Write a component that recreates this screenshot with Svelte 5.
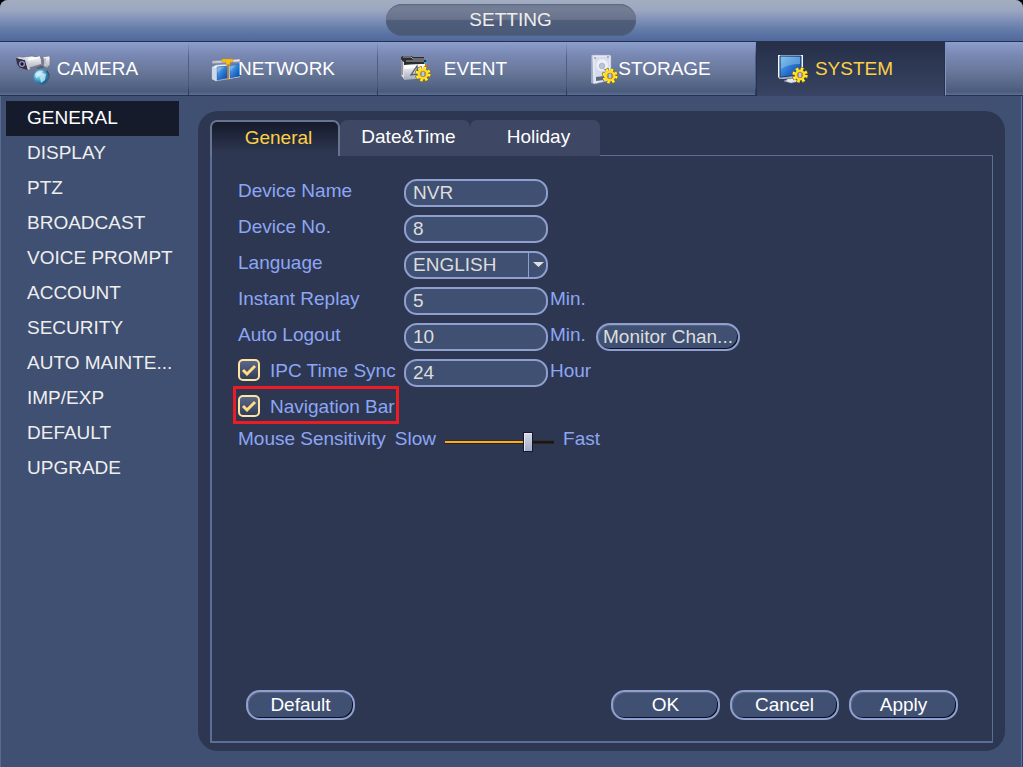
<script lang="ts">
	interface NavItem {
		id: string;
		label: string;
	}

	const navItems: NavItem[] = [
		{ id: 'camera', label: 'CAMERA' },
		{ id: 'network', label: 'NETWORK' },
		{ id: 'event', label: 'EVENT' },
		{ id: 'storage', label: 'STORAGE' },
		{ id: 'system', label: 'SYSTEM' }
	];

	const sideItems = [
		'GENERAL',
		'DISPLAY',
		'PTZ',
		'BROADCAST',
		'VOICE PROMPT',
		'ACCOUNT',
		'SECURITY',
		'AUTO MAINTE...',
		'IMP/EXP',
		'DEFAULT',
		'UPGRADE'
	];

	const tabs = ['General', 'Date&Time', 'Holiday'];

	let activeNav = $state('system');
	let activeSide = $state('GENERAL');
	let activeTab = $state('General');

	let deviceName = $state('NVR');
	let deviceNo = $state('8');
	let language = $state('ENGLISH');
	let instantReplay = $state('5');
	let autoLogout = $state('10');
	let ipcSync = $state(true);
	let ipcHours = $state('24');
	let navigationBar = $state(true);
	let sensitivity = $state(79);
</script>

{#snippet gear(cx: number, cy: number)}
	<circle {cx} {cy} r="6" fill="none" stroke="#8f6a1c" stroke-width="4.400" stroke-dasharray="2.900 1.812" />
	<circle {cx} {cy} r="5.8" fill="none" stroke="#fff02a" stroke-width="3.4" stroke-dasharray="2.3 2.255" />
	<circle {cx} {cy} r="4.1" fill="none" stroke="#ffe01e" stroke-width="2.6" />
	<circle {cx} {cy} r="2.8" fill="#7e9bd0" stroke="#d98a22" stroke-width="1" />
	<path d="M{cx} {cy - 2}v4" stroke="#dfe6f5" stroke-width="1.2" />
{/snippet}

{#snippet icon(id: string)}
	<svg class="nav-icon" viewBox="0 0 38 36" aria-hidden="true">
		<defs>
			<linearGradient id="metal" x1="0" y1="0" x2="0" y2="1">
				<stop offset="0" stop-color="#ffffff" />
				<stop offset="1" stop-color="#a3a8b9" />
			</linearGradient>
			<linearGradient id="screen" x1="0" y1="0" x2="1" y2="1">
				<stop offset="0" stop-color="#7fc0ef" />
				<stop offset="0.5" stop-color="#2a78d2" />
				<stop offset="1" stop-color="#0b3f9c" />
			</linearGradient>
			<radialGradient id="globe" cx="0.35" cy="0.3" r="0.8">
				<stop offset="0" stop-color="#d9f7fd" />
				<stop offset="0.5" stop-color="#45a8d4" />
				<stop offset="1" stop-color="#0d3d66" />
			</radialGradient>
		</defs>
		{#if id === 'camera'}
			<path d="M21 14l6-3 4 2-4 4-6 1z" fill="#555a6e" />
			<path d="M27 6l6-1 1 1v8l-3 3-4-2z" fill="url(#metal)" stroke="#6a7084" stroke-width="0.6" />
			<path d="M26 8l4-1v6l-4 2z" fill="#777c8f" />
			<path d="M29 6v8" stroke="#fff" stroke-width="1" />
			<path d="M1 7l15-2 9 2 1 7-12 5-10-1z" fill="url(#metal)" stroke="#5b6074" stroke-width="0.6" />
			<path d="M12 17l13-4v2l-12 4z" fill="#75798c" />
			<path d="M12 9l12-3" stroke="#fff" stroke-width="1.5" />
			<path d="M0 7l9 2 3 10-8-2-3-4z" fill="#33333f" />
			<path d="M0 6l9 3 5-1-11-2z" fill="#d3d6e0" />
			<path d="M9 9l3 1 2 8-2 1z" fill="#c6c9d6" />
			<circle cx="6" cy="13" r="3" fill="#9a90cf" />
			<circle cx="6" cy="13" r="1.7" fill="#1d1240" />
			<path d="M31 19q6 7-2 14l-5 1z" fill="#2c4058" opacity="0.8" />
			<circle cx="25" cy="26" r="7.4" fill="url(#globe)" stroke="#4a8bb5" stroke-width="0.5" />
			<path d="M19 23q4-4 8-3l-2 4-5 3zM26 22l4 1-1 6-4 3-1-5z" fill="#d3f2f8" opacity="0.7" />
		{:else if id === 'network'}
			<path d="M7 10l14-1 14-1v3l-28 2z" fill="url(#metal)" stroke="#7e879a" stroke-width="0.6" />
			<path d="M7 16l4-2 12-1v15l-12 2-4-2z" fill="#f4f7fb" stroke="#8a9cbd" stroke-width="0.6" />
			<path d="M7 16l4 1v13l-4-2z" fill="#cdd8ea" />
			<path d="M12 16l11-1v12l-11 2z" fill="url(#screen)" stroke="#1b4d94" stroke-width="0.6" />
			<path d="M24 15l11-2v13l-11 2z" fill="#e9f0fa" />
			<path d="M25 15l10-2v12l-10 2z" fill="url(#screen)" stroke="#1b4d94" stroke-width="0.6" />
			<path d="M12 22l7-6h-7zM25 20l6-6-6 1z" fill="#8cc8f3" opacity="0.5" />
			<path d="M17 8h11v3h-3v3h-4v-3h-4z" fill="#ffbe16" stroke="#c98a14" stroke-width="0.5" />
			<path d="M23 13v16" stroke="#cf8b25" stroke-width="1.5" />
		{:else if id === 'event'}
			<path d="M7 6l2-1h8l2 1h11v3h2l1 8H8z" fill="#2b2b2d" />
			<path d="M9 6h8l2 2h11M12 10h18" fill="none" stroke="#a9abb0" stroke-width="1" />
			<path d="M7 9l3 2v17l-3-4z" fill="#dfe0e6" />
			<path d="M8 10v14" stroke="#4c4c50" stroke-width="1" />
			<path d="M10 14l22-1v14l-22 2z" fill="url(#metal)" />
			<path d="M10 14l22-1v3l-22 2z" fill="#ffffff" />
			<path d="M23 15l-6 9 7-1zM23 18v6" fill="none" stroke="#555b73" stroke-width="1.300" />
			<path d="M30 11h3v2h-3z" fill="#3ba8dd" />
			<path d="M31 13h2v4h-2z" fill="#e0672f" />
			{@render gear(29, 23)}
		{:else if id === 'storage'}
			<path d="M8 4l3 1v28l-3-1z" fill="#9ba5c0" />
			<path d="M9 4h18l1 1v24l-17 4-1-1z" fill="#e4e8f5" stroke="#9aa5c2" stroke-width="0.6" />
			<path d="M12 6h14v17l-14 4z" fill="#d6dbeb" />
			<circle cx="19" cy="14" r="6" fill="#eceff8" />
			<circle cx="19" cy="15" r="2.800" fill="#bac3d8" stroke="#97a2ba" stroke-width="0.6" />
			<path d="M21 18l3 3" stroke="#a3adc5" stroke-width="1.500" />
			<path d="M13 26l8-1v4l-8 1z" fill="#5d6884" />
			<circle cx="12" cy="7" r="0.8" fill="#68738e" />
			<circle cx="25" cy="6" r="0.8" fill="#68738e" />
			{@render gear(27, 25)}
		{:else}
			<path d="M5 4h25v22l-23 2-2-2z" fill="#f2f5fa" />
			<path d="M5 26l2 2 19-2v-1z" fill="#9aa6be" />
			<path d="M7 5h21v19l-21 2z" fill="url(#screen)" stroke="#1b3869" stroke-width="1" />
			<path d="M8 6h19v7q-12 0-19 5z" fill="#8fc6ea" opacity="0.5" />
			<path d="M14 28l8-1 1 2 4 1-9 2-7-2 3-1z" fill="#e3e8f1" stroke="#8792aa" stroke-width="0.5" />
			{@render gear(27, 24)}
		{/if}
	</svg>
{/snippet}

{#snippet textBox(id: string, value: string, update: (v: string) => void)}
	<input class="field" {id} type="text" {value} oninput={(e) => update(e.currentTarget.value)} />
{/snippet}

<div class="window">
	<header class="title-bar">
		<h1>SETTING</h1>
	</header>

	<nav class="main-nav" aria-label="Main">
		{#each navItems as item (item.id)}
			<button
				type="button"
				class="nav-item"
				class:active={activeNav === item.id}
				onclick={() => (activeNav = item.id)}
			>
				{@render icon(item.id)}
				<span>{item.label}</span>
			</button>
		{/each}
		<div class="nav-rest"></div>
	</nav>

	<div class="body">
		<aside class="sidebar">
			{#each sideItems as item (item)}
				<button
					type="button"
					class="side-item"
					class:active={activeSide === item}
					onclick={() => (activeSide = item)}
				>
					{item}
				</button>
			{/each}
		</aside>

		<main class="panel">
			<div class="tabs" role="tablist">
				{#each tabs as tab (tab)}
					<button
						type="button"
						role="tab"
						class="tab"
						aria-selected={activeTab === tab}
						class:active={activeTab === tab}
						onclick={() => (activeTab = tab)}
					>
						{tab}
					</button>
				{/each}
				<div class="tabs-rest"></div>
			</div>

			<form class="frame" onsubmit={(e) => e.preventDefault()}>
				<div class="rows">
					<div class="row">
						<label for="device-name">Device Name</label>
						{@render textBox('device-name', deviceName, (v) => (deviceName = v))}
					</div>
					<div class="row">
						<label for="device-no">Device No.</label>
						{@render textBox('device-no', deviceNo, (v) => (deviceNo = v))}
					</div>
					<div class="row">
						<label for="language">Language</label>
						<div class="select-wrap">
							<select class="field" id="language" bind:value={language}>
								<option>ENGLISH</option>
							</select>
							<svg class="arrow" viewBox="0 0 20 24" aria-hidden="true">
								<path d="M0 0h1v24h-1z" fill="#8f9fcf" />
								<path d="M5 9h11l-5.500 5z" fill="#e0e0e0" />
							</svg>
						</div>
					</div>
					<div class="row">
						<label for="instant-replay">Instant Replay</label>
						{@render textBox('instant-replay', instantReplay, (v) => (instantReplay = v))}
						<span class="unit">Min.</span>
					</div>
					<div class="row">
						<label for="auto-logout">Auto Logout</label>
						{@render textBox('auto-logout', autoLogout, (v) => (autoLogout = v))}
						<span class="unit">Min.</span>
						<button type="button" class="pill monitor">Monitor Chan...</button>
					</div>
					<div class="row">
						<label class="check">
							<input type="checkbox" bind:checked={ipcSync} />
							<span>IPC Time Sync</span>
						</label>
						<input class="field" type="text" aria-label="IPC Time Sync" bind:value={ipcHours} />
						<span class="unit">Hour</span>
					</div>
					<div class="row short">
						<label class="check marked">
							<input type="checkbox" bind:checked={navigationBar} />
							<span>Navigation Bar</span>
						</label>
					</div>
					<div class="row sensitivity">
						<label for="sensitivity">Mouse Sensitivity</label>
						<span>Slow</span>
						<input
							id="sensitivity"
							type="range"
							min="0"
							max="100"
							bind:value={sensitivity}
							style:--filled="{sensitivity}%"
						/>
						<span>Fast</span>
					</div>
				</div>

				<footer class="actions">
					<button type="button" class="pill first">Default</button>
					<button type="submit" class="pill">OK</button>
					<button type="button" class="pill">Cancel</button>
					<button type="button" class="pill">Apply</button>
				</footer>
			</form>
		</main>
	</div>
</div>

<style>
	:global(body) {
		background: #000;
	}

	.window {
		display: flex;
		flex-direction: column;
		min-height: 100vh;
		box-sizing: border-box;
		overflow: hidden;
		border-radius: 8px 8px 0 0;
		background: #405072;
		box-shadow: inset 1px 0 #5a6a8f, inset -1px 0 #2d3c66, inset -2px 0 #5873a3;
		font: 19px/24px 'Liberation Sans', Arial, sans-serif;
		color: #fff;
	}

	button,
	input,
	select {
		font: inherit;
		color: inherit;
		margin: 0;
	}

	button {
		border: 0;
		padding: 0;
		background: none;
		cursor: pointer;
	}

	.title-bar {
		display: flex;
		justify-content: center;
		align-items: center;
		height: 41px;
		padding-right: 2px;
		border-bottom: 1px solid #27314f;
		background: linear-gradient(#a2adbf 0%, #9ba7c0 25%, #7e8fb8 50%, #6079a6 75%, #50689e 100%);
	}

	h1 {
		box-sizing: border-box;
		width: 250px;
		margin: 0 0 1px;
		padding: 4px 0;
		border-radius: 16px;
		background: linear-gradient(#6d7790 0%, #747e95 15%, #68738b 48%, #4e5d7a 52%, #4a5977 100%);
		box-shadow: inset 0 1px #5d6a86, inset 0 -1px #52617e;
		font: inherit;
		text-align: center;
		color: #eee;
	}

	.main-nav {
		display: grid;
		grid-template-columns: repeat(5, 189px) 1fr;
		height: 54px;
	}

	.nav-item,
	.nav-rest {
		border-bottom: 1px solid #27314f;
		background: linear-gradient(#8c9ecb 0%, #7888b3 25%, #667596 60%, #4a5c7c 94%, #5b6f97 100%);
	}

	.nav-item {
		display: grid;
		align-items: center;
		border-right: 1px solid;
		border-image: linear-gradient(#8c9ecb, #4d5f88 30%, #4a5a80 80%, #27314f 98%) 1;
	}

	.nav-item > * {
		grid-area: 1 / 1;
	}

	.nav-item span {
		padding-left: 7px;
		text-align: center;
	}

	.nav-icon {
		width: 38px;
		height: 36px;
		margin-left: 16px;
	}

	.nav-item.active {
		border-image: none;
		border: solid #27314f;
		border-width: 0 1px;
		background: linear-gradient(#272f48, #2e3a55 50%, #394363);
		color: #ffd045;
	}

	.nav-rest {
		border-left: 1px solid #8493ba;
	}

	.body {
		display: flex;
		flex: 1;
		padding: 5px 18px 16px 6px;
	}

	.sidebar {
		display: flex;
		flex-direction: column;
		width: 173px;
		margin-right: 19px;
	}

	.side-item {
		height: 35px;
		padding: 0 0 2px 21px;
		color: #eee;
		text-align: left;
		white-space: nowrap;
	}

	.side-item.active {
		background: #161b2b;
		color: #fff;
	}

	.panel {
		display: flex;
		flex: 1;
		flex-direction: column;
		margin-top: 10px;
		padding: 9px 12px 8px;
		border-radius: 20px;
		background: #2e3751;
	}

	.tabs {
		display: flex;
		height: 36px;
	}

	.tab {
		width: 130px;
		padding: 0 0 2px 7px;
		border-radius: 7px 7px 0 0;
		background: #3e4764;
	}

	.tab.active {
		border: 2px solid #69758f;
		border-bottom: 0;
		background: linear-gradient(#151a2b, #2e3751 90%);
		box-sizing: border-box;
		color: #ffd045;
	}

	.tabs-rest {
		flex: 1;
		border-bottom: 1px solid #5a6f98;
		height: 35px;
	}

	.frame {
		display: flex;
		flex: 1;
		flex-direction: column;
		justify-content: space-between;
		padding: 23px 34px 21px 26px;
		border: solid #5a6f98;
		border-width: 0 1px 2px 2px;
	}

	.rows {
		display: flex;
		flex-direction: column;
		gap: 8px;
		color: #8ca6f5;
	}

	.row {
		display: flex;
		align-items: flex-start;
		height: 28px;
		white-space: nowrap;
	}

	.row.short {
		height: 24px;
	}

	.row > label {
		width: 166px;
	}

	.field {
		box-sizing: border-box;
		width: 144px;
		height: 28px;
		padding: 0 8px 0 7px;
		border: 2px solid #8f9fcf;
		border-radius: 13px;
		background: #405072;
		color: #ddd;
		outline: 0;
	}

	.select-wrap {
		position: relative;
		display: flex;
	}

	select.field {
		appearance: none;
	}

	.arrow {
		position: absolute;
		top: 2px;
		right: 0;
		width: 20px;
		height: 24px;
		pointer-events: none;
	}

	.unit {
		width: 48px;
		padding-left: 2px;
		box-sizing: border-box;
	}

	.pill {
		box-sizing: border-box;
		width: 109px;
		height: 30px;
		border: 2px solid #8f9fcf;
		border-radius: 14px;
		background: #405072;
		box-shadow: inset 1px 1px #566482, inset -1px -1px #0b1226;
	}

	.monitor {
		width: 144px;
		height: 28px;
		color: #ddd;
	}

	.check {
		display: flex;
		gap: 10px;
	}

	.check input {
		appearance: none;
		flex: none;
		width: 22px;
		height: 22px;
		border: 2px solid #ffe3a0;
		border-radius: 5px;
		background: linear-gradient(#5b6786, #313d5a);
	}

	.check input:checked {
		background:
			url("data:image/svg+xml,%3Csvg xmlns='http://www.w3.org/2000/svg' viewBox='0 0 18 18'%3E%3Cpath d='M3 9l4 4 8-8' fill='none' stroke='%23ffdc84' stroke-width='3'/%3E%3C/svg%3E") center / 18px 18px no-repeat,
			linear-gradient(#5b6786, #313d5a);
	}

	.marked {
		position: relative;
	}

	.marked::after {
		content: '';
		position: absolute;
		inset: -9px 5px -5px -5px;
		border: 3px solid #ed1c24;
	}

	.sensitivity {
		gap: 9px;
	}

	.sensitivity > label {
		width: auto;
	}

	input[type='range'] {
		appearance: none;
		width: 109px;
		height: 20px;
		margin-top: 5px;
		background: linear-gradient(to right, #ffab20 var(--filled), #181818 var(--filled)) center / 100% 2px no-repeat,
			linear-gradient(#3b2f25, #222) center / 100% 4px no-repeat;
	}

	input[type='range']::-webkit-slider-thumb {
		appearance: none;
		box-sizing: border-box;
		width: 10px;
		height: 20px;
		border: 1px solid #161a28;
		background: linear-gradient(#d3d8e8, #a4acc9);
		box-shadow: inset 1px 1px #e8ebf5;
	}

	.actions {
		display: flex;
		gap: 10px;
		padding-left: 8px;
	}

	.actions .first {
		margin-right: auto;
	}
</style>
